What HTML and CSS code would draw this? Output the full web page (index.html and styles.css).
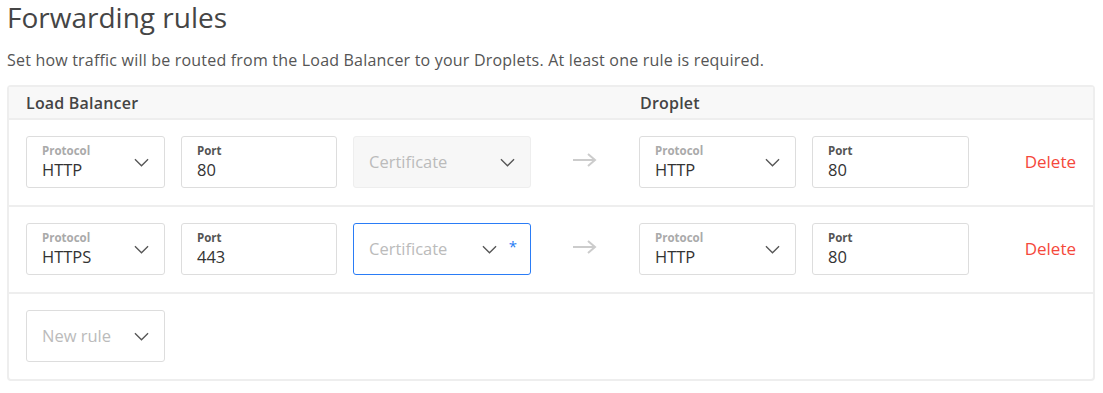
FILE: index.html
```html
<!DOCTYPE html>
<html>
<head>
<meta charset="utf-8">
<link rel="stylesheet" href="styles.css">
</head>
<body>
<div class="page">
  <h1 class="title">Forwarding rules</h1>
  <p class="desc">Set how traffic will be routed from the Load Balancer to your Droplets. At least one rule is required.</p>
  <div class="table">
    <div class="head">
      <div class="head-lb">Load Balancer</div>
      <div class="head-dr">Droplet</div>
    </div>
    <div class="row">
      <div class="box w-proto">
        <div class="lbl lbl-light">Protocol</div>
        <div class="val">HTTP</div>
        <svg class="chev" viewBox="0 0 16 9"><path d="M1 1 L8 8 L15 1" /></svg>
      </div>
      <div class="box w-port">
        <div class="lbl">Port</div>
        <div class="val">80</div>
      </div>
      <div class="box w-cert disabled">
        <div class="ph">Certificate</div>
        <svg class="chev" viewBox="0 0 16 9"><path d="M1 1 L8 8 L15 1" /></svg>
      </div>
      <div class="arrow-col">
        <svg class="arrow" viewBox="0 0 24 14"><path d="M0 7 H22 M15 1 L22 7 L15 13" /></svg>
      </div>
      <div class="box w-dproto">
        <div class="lbl lbl-light">Protocol</div>
        <div class="val">HTTP</div>
        <svg class="chev" viewBox="0 0 16 9"><path d="M1 1 L8 8 L15 1" /></svg>
      </div>
      <div class="box w-dport">
        <div class="lbl">Port</div>
        <div class="val">80</div>
      </div>
      <div class="del">Delete</div>
    </div>
    <div class="row">
      <div class="box w-proto">
        <div class="lbl lbl-light">Protocol</div>
        <div class="val">HTTPS</div>
        <svg class="chev" viewBox="0 0 16 9"><path d="M1 1 L8 8 L15 1" /></svg>
      </div>
      <div class="box w-port">
        <div class="lbl">Port</div>
        <div class="val">443</div>
      </div>
      <div class="box w-cert focus">
        <div class="ph">Certificate</div>
        <svg class="chev chev-req" viewBox="0 0 16 9"><path d="M1 1 L8 8 L15 1" /></svg>
        <span class="req">*</span>
      </div>
      <div class="arrow-col">
        <svg class="arrow" viewBox="0 0 24 14"><path d="M0 7 H22 M15 1 L22 7 L15 13" /></svg>
      </div>
      <div class="box w-dproto">
        <div class="lbl lbl-light">Protocol</div>
        <div class="val">HTTP</div>
        <svg class="chev" viewBox="0 0 16 9"><path d="M1 1 L8 8 L15 1" /></svg>
      </div>
      <div class="box w-dport">
        <div class="lbl">Port</div>
        <div class="val">80</div>
      </div>
      <div class="del">Delete</div>
    </div>
    <div class="row last">
      <div class="box w-proto">
        <div class="ph">New rule</div>
        <svg class="chev" viewBox="0 0 16 9"><path d="M1 1 L8 8 L15 1" /></svg>
      </div>
    </div>
  </div>
</div>
</body>
</html>
```
FILE: styles.css
```css
* { box-sizing: border-box; }
html, body { margin: 0; padding: 0; background: #fff; }
body { font-family: "Open Sans", Lato, sans-serif; color: #444; }
.page { padding: 0 8px 0 7px; }
.title {
  margin: 0;
  padding-top: 0;
  font-size: 28px;
  font-weight: 400;
  line-height: 34px;
  color: #454545;
}
.desc {
  margin: 16px 0 0 0;
  font-size: 16px;
  letter-spacing: 0.2px;
  line-height: 20px;
  color: #555;
}
.table {
  margin-top: 15px;
  width: 1088px;
  border: 2px solid #eeeeee;
  border-radius: 4px;
}
.head {
  display: flex;
  height: 33px;
  align-items: center;
  background: #f8f8f8;
  border-bottom: 2px solid #eeeeee;
  padding-left: 17px;
  font-size: 16px;
  letter-spacing: 0.2px;
  font-weight: 600;
  color: #444;
}
.head-lb { width: 614px; }
.row {
  display: flex;
  align-items: center;
  padding: 16px 17px 17px 17px;
  border-bottom: 2px solid #eeeeee;
}
.row.last { border-bottom: 0; }
.box {
  position: relative;
  height: 52px;
  border: 1px solid #dddddd;
  border-radius: 3px;
  padding-left: 15px;
  margin-right: 16px;
  background: #fff;
}
.w-proto { width: 139px; }
.w-port { width: 156px; }
.w-cert { width: 178px; margin-right: 0; }
.w-dproto { width: 157px; }
.w-dport { width: 157px; margin-right: 0; }
.lbl {
  margin-top: 7px;
  font-size: 11.5px;
  font-weight: 700;
  line-height: 13px;
  color: #555;
}
.lbl-light { color: #aaaaaa; }
.val {
  margin-top: 2px;
  font-size: 16.5px;
  line-height: 22px;
  color: #333;
}
.ph {
  font-size: 16.5px;
  line-height: 50px;
  color: #bbbbbb;
}
.disabled { background: #f7f7f7; border-color: #eeeeee; }
.focus { border-color: #2a7cf6; }
.chev {
  position: absolute;
  right: 15px;
  top: 21px;
  width: 15px;
  height: 9px;
  fill: none;
  stroke: #555;
  stroke-width: 1.4;
}
.chev-req { right: 33px; }
.req {
  position: absolute;
  right: 13px;
  top: 12px;
  font-size: 15px;
  color: #1f7bf4;
}
.arrow-col {
  width: 108px;
  display: flex;
  justify-content: center;
}
.arrow {
  width: 24px;
  height: 14px;
  fill: none;
  stroke: #cccccc;
  stroke-width: 2;
  margin-bottom: 4px;
}
.del {
  margin-left: auto;
  font-size: 17px;
  color: #f5483b;
  margin-bottom: 2px;
}
```
